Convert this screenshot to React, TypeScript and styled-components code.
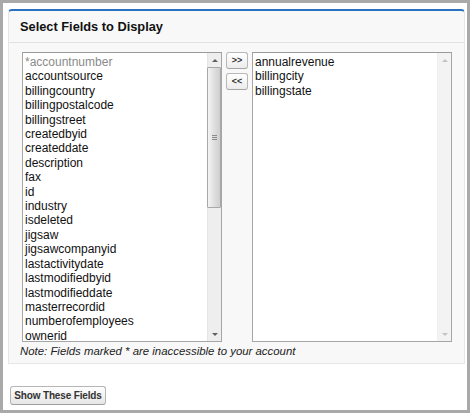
import * as React from 'react'
import styled, { createGlobalStyle } from 'styled-components'

const availableFields = [
	'*accountnumber',
	'accountsource',
	'billingcountry',
	'billingpostalcode',
	'billingstreet',
	'createdbyid',
	'createddate',
	'description',
	'fax',
	'id',
	'industry',
	'isdeleted',
	'jigsaw',
	'jigsawcompanyid',
	'lastactivitydate',
	'lastmodifiedbyid',
	'lastmodifieddate',
	'masterrecordid',
	'numberofemployees',
	'ownerid',
]

const selectedFields = ['annualrevenue', 'billingcity', 'billingstate']

const GlobalStyle = createGlobalStyle`
	html, body {
		margin: 0;
		padding: 0;
		background: #ffffff;
	}
	body {
		font-family: 'Liberation Sans', Arial, sans-serif;
		color: #000;
	}
`

const Frame = styled.div`
	box-sizing: border-box;
	width: 470px;
	height: 413px;
	border: 3px solid #a9a9a9;
	background: #ffffff;
	padding: 6px 0 0 5px;
	display: flex;
	flex-direction: column;
	align-items: flex-start;
`

const Panel = styled.section`
	box-sizing: border-box;
	width: 457px;
	height: 355px;
	background: #f8f8f8;
	border: 1px solid #e6e6e6;
	border-top: 2px solid #2a72bf;
	border-radius: 4px 4px 0 0;
	display: flex;
	flex-direction: column;
`

const PanelHeader = styled.header`
	height: 32px;
	box-sizing: border-box;
	border-bottom: 1px solid #e2e2e2;
	padding-left: 11px;
	display: flex;
	align-items: center;
`

const Title = styled.h2`
	margin: 0;
	font-size: 12.8px;
	font-weight: bold;
	color: #111;
`

const PanelBody = styled.div`
	padding: 9px 0 0 13px;
	display: flex;
	flex-direction: column;
`

const Picker = styled.div`
	display: flex;
	gap: 4px;
	align-items: flex-start;
`

const ListBox = styled.div`
	box-sizing: border-box;
	width: 200px;
	height: 290px;
	background: #ffffff;
	border: 1px solid #a6a6a6;
	border-top-color: #9a9a9a;
	display: flex;
	overflow: hidden;
`

const Options = styled.ul`
	flex: 1;
	margin: 0;
	padding: 2px 0 0 2px;
	list-style: none;
	font-size: 12px;
	line-height: 14.4px;
`

const Option = styled.li<{ $disabled?: boolean }>`
	white-space: nowrap;
	color: ${({ $disabled }) => ($disabled ? '#8a8a8a' : '#111')};
`

const ScrollBar = styled.div<{ $disabled?: boolean }>`
	width: 13px;
	flex: none;
	background: ${({ $disabled }) => ($disabled ? '#f3f3f3' : '#eeeeee')};
	border-left: 1px solid ${({ $disabled }) => ($disabled ? '#efefef' : '#e4e4e4')};
	display: flex;
	flex-direction: column;
`

const ArrowCell = styled.div<{ $down?: boolean; $disabled?: boolean }>`
	height: 14px;
	flex: none;
	display: flex;
	align-items: center;
	justify-content: center;

	&::after {
		content: '';
		width: 0;
		height: 0;
		border-left: 3px solid transparent;
		border-right: 3px solid transparent;
		${({ $down, $disabled }) =>
			$down
				? `border-top: 3px solid ${$disabled ? '#c4c4c4' : '#606060'};`
				: `border-bottom: 3px solid ${$disabled ? '#c4c4c4' : '#606060'};`}
	}
`

const Thumb = styled.div<{ $size: number }>`
	box-sizing: border-box;
	height: ${({ $size }) => $size}px;
	flex: none;
	margin: 0 0 0 -1px;
	border: 1px solid #a8a8a8;
	border-radius: 1px;
	background: linear-gradient(to right, #f4f4f4, #dcdcdc 60%, #cfcfcf);
	display: flex;
	align-items: center;
	justify-content: center;
`

const Grip = styled.span`
	width: 5px;
	height: 5px;
	background: repeating-linear-gradient(to bottom, #8c8c8c 0 1px, transparent 1px 2px);
`

const Track = styled.div`
	flex: 1;
`

const MoveButtons = styled.div`
	display: flex;
	flex-direction: column;
	gap: 4px;
`

const SmallButton = styled.button`
	box-sizing: border-box;
	width: 22px;
	height: 17px;
	padding: 0;
	border: 1px solid #b8b8b8;
	border-bottom-color: #a4a4a4;
	border-radius: 3px;
	background: linear-gradient(#ffffff, #ececec);
	font-family: 'Liberation Sans', Arial, sans-serif;
	font-size: 9px;
	font-weight: bold;
	color: #333;
	line-height: 15px;
`

const Note = styled.p`
	margin: 2px 0 0 -2px;
	font-size: 11.4px;
	font-style: italic;
	color: #222;
	line-height: 14px;
`

const SubmitButton = styled.button`
	box-sizing: border-box;
	margin: 22px 0 0 2px;
	height: 19px;
	width: 96px;
	padding: 0;
	border: 1px solid #b5b5b5;
	border-bottom-color: #9f9f9f;
	border-radius: 3px;
	background: linear-gradient(#ffffff, #e6e6e6);
	font-family: 'Liberation Sans', Arial, sans-serif;
	font-size: 10px;
	font-weight: bold;
	letter-spacing: -0.15px;
	color: #333;
`

function FieldList({ items, scrollable }: { items: string[]; scrollable?: boolean }) {
	return (
		<ListBox>
			<Options>
				{items.map((item) => (
					<Option key={item} $disabled={item.startsWith('*')}>
						{item}
					</Option>
				))}
			</Options>
			<ScrollBar $disabled={!scrollable}>
				<ArrowCell $disabled={!scrollable} />
				{scrollable ? (
					<Thumb $size={141}>
						<Grip />
					</Thumb>
				) : null}
				<Track />
				<ArrowCell $down $disabled={!scrollable} />
			</ScrollBar>
		</ListBox>
	)
}

export default function App() {
	return (
		<>
			<GlobalStyle />
			<Frame>
				<Panel>
					<PanelHeader>
						<Title>Select Fields to Display</Title>
					</PanelHeader>
					<PanelBody>
						<Picker>
							<FieldList items={availableFields} scrollable />
							<MoveButtons>
								<SmallButton>&gt;&gt;</SmallButton>
								<SmallButton>&lt;&lt;</SmallButton>
							</MoveButtons>
							<FieldList items={selectedFields} />
						</Picker>
						<Note>Note: Fields marked * are inaccessible to your account</Note>
					</PanelBody>
				</Panel>
				<SubmitButton>Show These Fields</SubmitButton>
			</Frame>
		</>
	)
}
